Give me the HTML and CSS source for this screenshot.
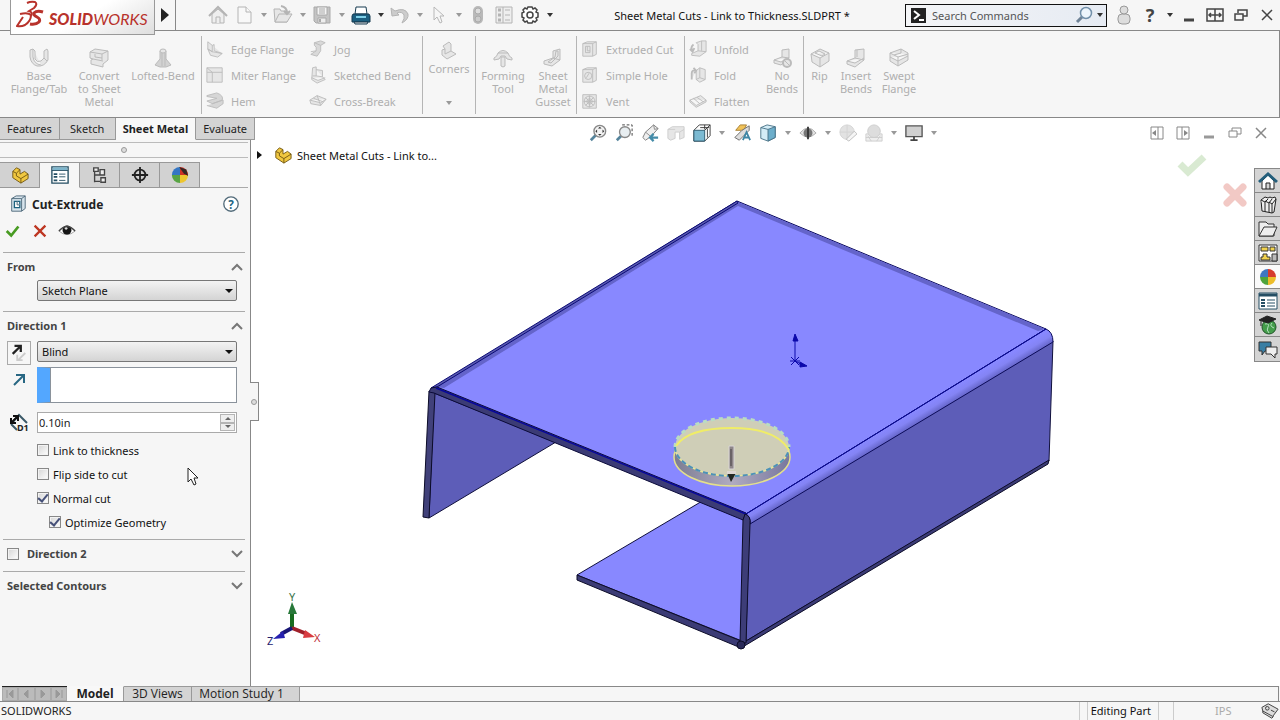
FILE: index.html
```html
<!DOCTYPE html>
<html lang="en">

<head>
  <meta charset="UTF-8" />
  <meta name="viewport" content="width=device-width, initial-scale=1.0" />
  <title>Sheet Metal Cuts - Link to Thickness.SLDPRT</title>
  <link rel="stylesheet" href="styles.css">
</head>

<body>

  <header class="titlebar">
    <div class="logo">
      <svg width="28" height="29" viewBox="0 0 28 29" fill="none" stroke="#b8322b" stroke-width="2">
        <path d="M11 3 Q15 1 19 2 Q22 4 18 8 L13 11 Q17 12 15 16" />
        <path d="M4 14 Q12 12 15 15 Q15 21 9 25 Q5 27 1 26 L7 17" />
        <path d="M27 12 Q21 10 18 13 Q17 15 21 17 Q25 19 23 22 Q20 25 14 24" stroke-width="3" />
      </svg>
      <span class="brand"><b>SOLID</b>WORKS</span>
    </div>
    <button class="logo-arrow" aria-label="Menu"><svg width="8" height="14" viewBox="0 0 8 14"><path d="M0 0 L8 7 L0 14 Z" fill="#222" /></svg></button>

    <nav class="quickbar">
      <button class="icon" aria-label="Home"><svg viewBox="0 0 20 20" fill="#eee" stroke="#b4b4b4"><path d="M4 9 V18 H16 V9 L10 4 Z" /><path d="M1 11 L10 2 L19 11" fill="none" stroke-width="2" /><path d="M8 18 V12 H12 V18" /></svg></button>
      <button class="icon first" aria-label="New"><svg viewBox="0 0 20 20" fill="#f8f8f8" stroke="#b4b4b4"><path d="M4 2 H12 L17 7 V18 H4 Z" /><path d="M12 2 V7 H17" /></svg></button>
      <button class="caret" aria-label="New options"></button>
      <button class="icon" aria-label="Open"><svg viewBox="0 0 20 20" fill="#e6e6e6" stroke="#b4b4b4"><path d="M1 4 H7 L8 6 H14 V17 H2 Z" /><path d="M2 17 L6 9 H19 L14 17 Z" /><path d="M8 1 Q14 2 14 8 M11 6 L14 9 L17 6" fill="none" stroke-width="2" /></svg></button>
      <button class="caret" aria-label="Open options"></button>
      <button class="icon" aria-label="Save"><svg viewBox="0 0 20 20" fill="#c4c4c4" stroke="#aaa"><path d="M2 2 H18 V18 H4 L2 16 Z" /><path d="M5 2 H15 V10 H5 Z" fill="#f4f4f4" /><path d="M7 4 H13 M7 6 H13 M7 8 H13" /><path d="M6 13 H14 V18 H6 Z" fill="#eee" /><path d="M8 14 V17" stroke-width="2" /></svg></button>
      <button class="caret" aria-label="Save options"></button>
      <button class="icon" aria-label="Print"><svg viewBox="0 0 20 20" stroke="#173b50"><path d="M5 2 H15 L16 9 H4 Z" fill="#fff" /><path d="M2 9 H18 L19 11 V17 H1 V11 Z" fill="#1c5f80" /><path d="M5 12 H15" stroke="#7ed0e8" stroke-width="2" /><path d="M3 17 H17 L16 19 H4 Z" fill="#ddd" /></svg></button>
      <button class="caret dark" aria-label="Print options"></button>
      <button class="icon" aria-label="Undo"><svg viewBox="0 0 20 20" fill="#ccc" stroke="#b4b4b4"><path d="M1 3 L2 11 L9 10 L7 8 Q12 6 14 10 Q15 13 12 18 Q19 14 18 9 Q15 2 5 6 Z" /></svg></button>
      <button class="caret" aria-label="Undo options"></button>
      <button class="icon" aria-label="Select"><svg viewBox="0 0 20 20" fill="#f6f6f6" stroke="#b8b8b8"><path d="M5 2 V15 L8 12 L11 18 L13 17 L11 11 H15 Z" /></svg></button>
      <button class="caret" aria-label="Select options"></button>
      <button class="icon" aria-label="Rebuild"><svg viewBox="0 0 20 20"><rect x="5" y="1" width="10" height="18" rx="5" fill="#b9b9b9" /><circle cx="10" cy="6" r="3" fill="#ddd" stroke="#aaa" /><circle cx="10" cy="14" r="3" fill="#ccc" stroke="#aaa" /></svg></button>
      <button class="icon first" aria-label="File properties"><svg viewBox="0 0 20 20" fill="#eee" stroke="#b4b4b4"><path d="M2 2 H18 V18 H2 Z M9 2 V18" /><path d="M4 5 H7 M4 10 H7 M4 15 H7" stroke-width="3" /><path d="M11 5 H16 M11 10 H16 M11 15 H16" /></svg></button>
      <button class="icon first" aria-label="Options"><svg viewBox="0 0 20 20" fill="none" stroke="#444"><path d="M8 2 H12 L13 4 L15 3 L17 5 L16 7 L18 8 V12 L16 13 L17 15 L15 17 L13 16 L12 18 H8 L7 16 L5 17 L3 15 L4 13 L2 12 V8 L4 7 L3 5 L5 3 L7 4 Z" fill="#fff" stroke-width="1.5" /><circle cx="10" cy="10" r="3" stroke-width="1.5" /></svg></button>
      <button class="caret dark" aria-label="More options"></button>
    </nav>

    <h1 class="doc-title">Sheet Metal Cuts - Link to Thickness.SLDPRT *</h1>

    <div class="search">
      <svg width="15" height="15" viewBox="0 0 15 15"><path d="M0 0 H15 V15 H0 Z" fill="#222" /><path d="M3 3 L8 7 L3 11 M8 12 H13" fill="none" stroke="#fff" stroke-width="2" /></svg>
      <input type="text" placeholder="Search Commands" aria-label="Search Commands" />
      <svg width="18" height="18" viewBox="0 0 18 18"><path d="M7 11 L2 16" stroke="#6f8397" stroke-width="3" /><circle cx="11" cy="7" r="5.5" fill="#edf5fc" stroke="#7290aa" stroke-width="1.5" /></svg>
      <button class="caret dark" aria-label="Search options"></button>
    </div>

    <div class="window-tools">
      <button aria-label="Log in"><svg viewBox="0 0 20 20" fill="#ddd" stroke="#999"><rect x="4" y="9" width="12" height="10" rx="4" /><circle cx="10" cy="5" r="4" /></svg></button>
      <button class="help">?</button>
      <button class="caret dark" aria-label="Help options"></button>
      <button aria-label="Minimize"><svg viewBox="0 0 20 20"><path d="M5 15 H15" stroke="#444" stroke-width="3" /></svg></button>
      <button aria-label="Span displays"><svg viewBox="0 0 20 20" fill="none" stroke="#444" stroke-width="1.5"><path d="M2 4 H18 V16 H2 Z M10 4 V16 M4 10 H16 M6 8 L4 10 L6 12 M14 8 L16 10 L14 12" /></svg></button>
      <button aria-label="Restore"><svg viewBox="0 0 20 20" fill="none" stroke="#444" stroke-width="1.5"><path d="M7 8 V5 H16 V11 H12" /><path d="M4 9 H12 V15 H4 Z" /></svg></button>
      <button aria-label="Close"><svg viewBox="0 0 20 20" fill="none" stroke="#444" stroke-width="1.5"><path d="M5 5 L15 15 M15 5 L5 15" /></svg></button>
    </div>
  </header>

  <section class="ribbon">
    <div class="group wide">
      <button class="big base" disabled><svg viewBox="0 0 20 20"><path d="M1 2 L4 1 L6 3 V11 Q8 15 12 13 L15 10 V3 L18 1 L19 3 V12 Q15 19 8 18 Q2 16 1 9 Z M4 1 V9 Q5 16 12 17 M15 10 L18 13" /></svg>Base<br>Flange/Tab</button>
      <button class="big convert" disabled><svg viewBox="0 0 20 20"><path d="M1 4 L6 1 L19 3 V12 L14 16 V19 L2 16 V12 L4 11 L1 10 Z" /><path d="M1 4 L13 6 L19 3 M13 6 V12 M4 11 L14 13 M6 6 V9 L13 10" fill="none" /></svg>Convert<br>to Sheet<br>Metal</button>
      <button class="big lofted" disabled><svg viewBox="0 0 20 20"><path d="M7 3 H13 V11 L18 17 L13 19 H7 L2 17 L7 11 Z" fill="#d2d2d2" /><ellipse cx="10" cy="3" rx="3" ry="2" /><path d="M9 5 V18 M12 5 V18" /></svg>Lofted-Bend</button>
    </div>

    <div class="group columns">
      <button class="small" disabled><svg viewBox="0 0 20 20"><path d="M2 2 L7 6 V13 L2 10 Z M2 10 L7 13 L18 15 L13 19 L5 17 Z M7 6 L9 5 V12 L18 15" /></svg>Edge Flange</button>
      <button class="small" disabled><svg viewBox="0 0 20 20"><path d="M1 2 H18 V18 H1 Z M1 7 H18 M7 7 V18 M1 2 L7 7" /></svg>Miter Flange</button>
      <button class="small" disabled><svg viewBox="0 0 20 20"><path d="M1 4 L12 1 Q20 4 18 9 L7 13 L1 10 L12 7 L1 5 Z M1 15 L12 18 L19 13 V9 L7 13" fill="#d6d6d6" /></svg>Hem</button>
      <button class="small" disabled><svg viewBox="0 0 20 20"><path d="M6 3 L13 1 L18 3 L13 6 V12 L9 18 L2 16 L8 12 V8 L6 6 Z M6 3 L13 6 M2 13 L8 12" fill="#d9d9d9" /></svg>Jog</button>
      <button class="small" disabled><svg viewBox="0 0 20 20"><path d="M4 2 L8 1 V11 L15 12 L18 15 L9 19 L3 15 Z M8 4 L15 5 V12 M4 11 L8 11 M3 13 L10 16 L18 13" /></svg>Sketched Bend</button>
      <button class="small" disabled><svg viewBox="0 0 20 20"><path d="M1 9 L9 4 L19 8 L13 15 L2 13 Z M1 9 L13 12 L19 8 M9 4 L13 15 M5 7 L16 11" /></svg>Cross-Break</button>
    </div>

    <div class="group">
      <button class="big corners" disabled><svg viewBox="0 0 20 20"><path d="M4 5 L10 1 L12 3 V10 L17 13 L8 18 L3 14 V9 L6 8 Z M12 10 L6 13 M6 8 V13" /></svg>Corners<i></i></button>
    </div>

    <div class="group">
      <button class="big forming" disabled><svg viewBox="0 0 20 20"><path d="M1 10 Q4 9 5 5 Q10 0 15 5 Q16 9 19 10 V12 L14 11 L12 8 H8 L6 11 L1 12 Z M8 9 H12 V18 L10 19 L8 18 Z M5 5 H15" /></svg>Forming<br>Tool</button>
      <button class="big gusset" disabled><svg viewBox="0 0 20 20"><path d="M1 13 L10 10 V3 L17 1 V12 L9 18 L1 16 Z M10 10 L17 12 M13 3 L15 3 V8 L8 15 L5 14 L12 9 Z" /></svg>Sheet<br>Metal<br>Gusset</button>
    </div>

    <div class="group columns single cuts">
      <button class="small" disabled><svg viewBox="0 0 20 20"><path d="M2 4 L7 2 H17 V16 L13 18 H2 Z M2 4 H13 V18 M13 4 L17 2 M5 7 H10 V14 H5 Z M7 7 V12 H10" /></svg>Extruded Cut</button>
      <button class="small" disabled><svg viewBox="0 0 20 20"><path d="M2 4 L7 2 H17 V16 L13 18 H2 Z M2 4 H13 V18 M13 4 L17 2" /><circle cx="8" cy="11" r="4" /><path d="M6 13 L9 8" /></svg>Simple Hole</button>
      <button class="small" disabled><svg viewBox="0 0 20 20"><path d="M2 3 H17 V18 H2 Z" /><circle cx="9.5" cy="10.5" r="6" /><circle cx="9.5" cy="10.5" r="3" /><path d="M9.5 4 V17 M3 10.5 H16 M5 6 L14 15 M14 6 L5 15" /></svg>Vent</button>
    </div>

    <div class="group folds">
      <div class="columns single">
        <button class="small" disabled><svg viewBox="0 0 20 20"><path d="M8 3 L14 1 H19 V13 L12 18 L3 17 V15 L10 12 V5 Z M10 12 L19 13 M14 1 V12" /><path d="M5 5 Q1 8 4 12 M1 10 L4 13 L6 9" stroke-width="2" /></svg>Unfold</button>
        <button class="small" disabled><svg viewBox="0 0 20 20"><path d="M8 5 L12 2 L18 4 V15 L12 18 L8 15 Z M12 2 V13 L8 15 M12 13 L18 15" /><path d="M3 15 V8 Q3 4 8 5 M5 2 L8 5 L6 8" stroke-width="2" /></svg>Fold</button>
        <button class="small" disabled><svg viewBox="0 0 20 20"><path d="M1 9 L13 4 L19 9 L8 15 Z M1 9 V11 L8 17 L19 11 V9 M5 7 L12 13 M9 6 L16 11" /></svg>Flatten</button>
      </div>
      <button class="big nobends" disabled><svg viewBox="0 0 20 20"><path d="M2 12 L10 9 V2 L17 1 V10 L9 17 L2 15 Z M10 9 L17 10 M2 12 L9 14 L17 10" /><circle cx="15" cy="15" r="4" stroke-width="2" /><path d="M12 12 L18 18" /></svg>No<br>Bends</button>
    </div>

    <div class="group last">
      <button class="big rip" disabled><svg viewBox="0 0 20 20"><path d="M1 6 L10 1 L19 5 V13 L10 19 L2 14 Z M1 6 L10 10 L19 5 M10 10 V19 M5 5 L12 8 L15 6 L9 3 Z" /></svg>Rip</button>
      <button class="big insert" disabled><svg viewBox="0 0 20 20"><path d="M1 13 L9 10 V2 L18 1 V12 L9 19 L1 16 Z M9 10 L18 12 M1 13 L9 15 L18 10 M11 2 V9" /></svg>Insert<br>Bends</button>
      <button class="big swept" disabled><svg viewBox="0 0 20 20"><path d="M1 5 L12 1 L19 5 V12 L9 18 L1 13 Z M1 5 L9 9 L19 6 M9 9 V18 M1 9 L9 13 L19 8 M12 1 V5 L5 7" /></svg>Swept<br>Flange</button>
    </div>
  </section>

  <main class="workspace">
    <aside class="panel">
      <nav class="ribbon-tabs">
        <button>Features</button>
        <button>Sketch</button>
        <button class="active">Sheet Metal</button>
        <button>Evaluate</button>
      </nav>
      <div class="grip"><i class="dot"></i></div>

      <nav class="manager-tabs">
        <button aria-label="Feature tree"><svg viewBox="0 0 20 20" fill="#f0c740" stroke="#6f5510"><path d="M2 6 L6 2 L10 4 V9 L15 6 L19 9 V14 L11 19 L2 13 Z" /><path d="M2 6 L6 8 L10 4 M6 8 V11 L11 14 L19 9 M11 14 V19" fill="none" /></svg></button>
        <button class="active" aria-label="Property manager"><svg viewBox="0 0 20 20" fill="#fff" stroke="#244e63"><path d="M1 1 H19 V19 H1 Z" stroke-width="1.5" /><path d="M2 3 H18" stroke="#7fb6cd" stroke-width="3" /><path d="M1 5 H19" /><path d="M3 9 H7 M3 12 H7 M3 16 H7" stroke-width="2" /><path d="M9 9 H16 M9 12 H16 M9 16 H16" /></svg></button>
        <button aria-label="Configurations"><svg viewBox="0 0 20 20" fill="#eee" stroke="#444"><path d="M3 2 H8 V6 H3 Z M4 6 V18 M4 10 H10 M4 17 H10 M10 4 H15 V10 H10 Z M11 13 H16 V18 H11 Z" stroke-width="1.5" /></svg></button>
        <button aria-label="Dimensions"><svg viewBox="0 0 20 20" fill="none" stroke="#222" stroke-width="2"><circle cx="10" cy="10" r="6" /><path d="M10 1 V19 M1 10 H19" /></svg></button>
        <button aria-label="Display"><svg viewBox="0 0 20 20"><circle cx="10" cy="10" r="9" fill="#d8d8d8" /><path d="M10 10 L1 10 A9 9 0 0 1 10 1 Z" fill="#3576c3" /><path d="M10 10 V1 A9 9 0 0 1 19 10 Z" fill="#cf3127" /><path d="M10 10 H19 A9 9 0 0 1 10 19 Z" fill="#edc52e" /><path d="M10 10 V19 A9 9 0 0 1 1 10 Z" fill="#58a444" /><path d="M9 1 L17 4 L19 11 L14 8 Z" fill="#332725" /></svg></button>
      </nav>

      <div class="feature-head">
        <svg viewBox="0 0 20 20" fill="#d7e4ec" stroke="#496577"><path d="M3 4 L8 1 H18 V15 L14 18 H3 Z M3 4 H14 V18 M14 4 L18 1" /><path d="M6 7 H12 V14 H6 Z" fill="#fff" stroke="#1d627f" stroke-width="1.5" /><path d="M9 7 V11 H12" /></svg>
        <h2>Cut-Extrude</h2>
        <button aria-label="Help"><svg viewBox="0 0 20 20"><circle cx="10" cy="10" r="8" fill="#fff" stroke="#526b7a" stroke-width="1.5" /><text x="10" y="15" text-anchor="middle" font-size="13" font-weight="bold" fill="#226585">?</text></svg></button>
      </div>
      <div class="actions">
        <button aria-label="OK"><svg viewBox="0 0 20 20" fill="none" stroke="#489b22" stroke-width="3"><path d="M3 10 L8 15 L16 5" /></svg></button>
        <button aria-label="Cancel"><svg viewBox="0 0 20 20" fill="none" stroke="#bd3622" stroke-width="2.5"><path d="M4 4 L16 16 M16 4 L4 16" /></svg></button>
        <button aria-label="Preview"><svg viewBox="0 0 20 20"><path d="M1 10 Q10 -1 19 10 Q10 18 1 10 Z" fill="#fff" stroke="#999" /><circle cx="10" cy="9" r="5" fill="#161616" /><circle cx="9" cy="7" r="1.5" fill="#ddd" /><path d="M1 10 Q10 0 19 10" fill="none" stroke="#444" stroke-width="1.5" /></svg></button>
      </div>

      <section class="block from">
        <button class="block-title">From<svg class="chevron" viewBox="0 0 12 8"><path d="M1 7 L6 2 L11 7" /></svg></button>
        <div class="field">
          <div class="select"><select aria-label="From">
              <option>Sketch Plane</option>
            </select></div>
        </div>
      </section>

      <section class="block direction">
        <button class="block-title">Direction 1<svg class="chevron" viewBox="0 0 12 8"><path d="M1 7 L6 2 L11 7" /></svg></button>
        <div class="field">
          <button class="reverse" aria-label="Reverse direction"><svg viewBox="0 0 20 20"><path d="M3 11 L11 3 M5 2 H12 V9" fill="none" stroke="#222" stroke-width="2.5" /><path d="M17 10 L9 18 M8 12 V18 H14" fill="none" stroke="#ccc" stroke-width="2" /></svg></button>
          <div class="select"><select aria-label="End condition">
              <option>Blind</option>
            </select></div>
        </div>
        <div class="field">
          <svg class="lead" viewBox="0 0 24 24" fill="none" stroke="#286783" stroke-width="2"><path d="M7 18 L16 9 M9 8 H17 V16" /></svg>
          <textarea class="list" aria-label="Direction of extrusion"></textarea>
        </div>
        <div class="field depth-field">
          <svg class="lead" viewBox="0 0 24 24"><path d="M4 12 L12 3 L20 11 M4 12 L10 18" fill="none" stroke="#3b5968" stroke-width="2" /><path d="M4 11 L11 4 M6 4 H11 V9 M4 6 V11 H9" fill="none" stroke="#111" stroke-width="2" /><text x="10" y="19" font-size="9" font-weight="bold" fill="#222">D1</text></svg>
          <div class="spin">
            <input type="text" value="0.10in" aria-label="Depth" />
            <span><button class="up" aria-label="Increase"></button><button class="down" aria-label="Decrease"></button></span>
          </div>
        </div>
        <div class="checks">
          <label><input type="checkbox" />Link to thickness</label>
          <label><input type="checkbox" />Flip side to cut</label>
          <label><input type="checkbox" checked />Normal cut</label>
          <label class="nested"><input type="checkbox" checked />Optimize Geometry</label>
        </div>
      </section>

      <section class="block closed">
        <label class="block-title"><input type="checkbox" />Direction 2<svg class="chevron" viewBox="0 0 12 8"><path d="M1 1 L6 6 L11 1" /></svg></label>
      </section>
      <section class="block closed">
        <button class="block-title">Selected Contours<svg class="chevron" viewBox="0 0 12 8"><path d="M1 1 L6 6 L11 1" /></svg></button>
      </section>

      <button class="splitter" aria-label="Collapse panel"><i class="dot"></i></button>
      <svg class="cursor" width="12" height="19" viewBox="0 0 12 19"><path d="M1 1 V15 L4 12 L7 18 L9 17 L7 11 H11 Z" fill="#fff" stroke="#222" /></svg>
    </aside>

    <section class="viewport">
      <svg class="scene" viewBox="251 118 1029 568" preserveAspectRatio="xMidYMid meet">
        <defs>
          <linearGradient id="bend" gradientUnits="userSpaceOnUse" x1="896" y1="422" x2="902" y2="432">
            <stop offset="0" stop-color="#8888ff" />
            <stop offset="0.5" stop-color="#8484f4" />
            <stop offset="1" stop-color="#6868cc" />
          </linearGradient>
          <linearGradient id="wall" x1="0" x2="1" y1="0" y2="0">
            <stop offset="0" stop-color="#7c7c92" />
            <stop offset="0.5" stop-color="#b0abc0" />
            <stop offset="1" stop-color="#77779e" />
          </linearGradient>
        </defs>

        <!-- left and bottom flanges -->
        <path d="M434 393 L556 442 L429 518 Z" fill="#5d5db8" stroke="#10103c" />
        <path d="M429 391 L435 393 L429 518 L423 517 Z" fill="#41417a" stroke="#0c0c28" />
        <path d="M577 575 L704 500 L746 517 L742 641 Z" fill="#8888ff" stroke="#10103c" />
        <path d="M577 575 L741 641 V648 L577 580 Z" fill="#3b3b75" stroke="#0c0c28" />

        <!-- right side -->
        <path d="M749 522 L1053 341 L1049 461 L746 641 Z" fill="#5d5db8" stroke="#10103c" />
        <path d="M746 641 L1049 460 L1048 464 L741 648 Z" fill="#3b3b75" stroke="#0c0c28" />

        <!-- top face -->
        <path d="M737 201 L1046 329 L746 514 L434 388 Z" fill="#8888ff" stroke="#0b0b58" />
        <path d="M738 202 L1045 329 L1038 331 L738 206 L444 388 L436 387 Z" fill="#6464ca" />
        <path d="M737 201 L431 388 L437 387 L738 203 Z" fill="#5b5bb0" stroke="#0b0b75" />
        <path d="M1046 329 L746 514 Q751 517 750 524 L1053 342 Q1053 332 1046 329 Z" fill="url(#bend)" stroke="#0b0b58" />
        <path d="M1046 329 L746 514" stroke="#0808a0" />
        <path d="M431 388 L437 387 L746 513 L743 520 L434 393 L429 392 Z" fill="#3b3b75" stroke="#0c0c3a" />
        <path d="M436 388 L746 514" stroke="#08089c" stroke-width="1.5" />
        <path d="M743 520 L745 514 Q751 516 750 524 L746 643 H740 Z" fill="#3d3d78" stroke="#0c0c28" />
        <circle cx="741" cy="645" r="4" fill="#292958" stroke="#0c0c28" />

        <!-- cut preview -->
        <ellipse cx="732" cy="457" rx="58" ry="29" fill="url(#wall)" stroke="#e4e08b" stroke-width="1.5" />
        <ellipse cx="732" cy="447" rx="57" ry="29" fill="#cfceb7" />
        <path d="M675 447 A57 29 0 0 1 789 447" fill="none" stroke="#b9dcc2" stroke-width="3" stroke-dasharray="4 4" />
        <path d="M675 447 A57 29 0 0 0 789 447" fill="none" stroke="#e8e69b" stroke-width="1.5" />
        <path d="M675 447 A57 29 0 0 0 789 447" fill="none" stroke="#4c91b9" stroke-width="2" stroke-dasharray="5 3" />
        <path d="M676 446 Q688 428 732 428 Q776 428 789 450" fill="none" stroke="#f0ed67" stroke-width="2" />
        <path d="M729 446 H734 V469 H729 Z" fill="#8e8689" stroke="#d8d5d5" />
        <path d="M731 449 V466" stroke="#6a6366" stroke-width="2" />
        <path d="M727 473 L731 482 L736 473 Z" fill="#222721" />
        <path d="M727 471 H736 V474 H727 Z" fill="#ddd6d2" />

        <!-- origin -->
        <g stroke="#0b08aa" fill="#0b08aa">
          <path d="M795 361 V338 M795 361 L803 365 M791 357 L799 365 M799 357 L791 365 M790 361 H800" />
          <path d="M795 334 L798 341 H793 Z M800 362 L807 366 L800 367 Z" />
        </g>

        <!-- triad -->
        <path d="M292 629 V612" stroke="#176c20" stroke-width="4" />
        <path d="M292 602 L297 614 H288 Z" fill="#28783a" />
        <path d="M292 628 L307 634" stroke="#a0202a" stroke-width="4" />
        <path d="M315 637 L305 630 L303 638 Z" fill="#d83c42" />
        <path d="M292 628 L281 634" stroke="#191675" stroke-width="4" />
        <path d="M273 639 L283 631 L285 638 Z" fill="#2620b0" />
        <text x="289" y="601" fill="#39734a">Y</text>
        <text x="314" y="642" fill="#be3039">X</text>
        <text x="267" y="645" fill="#25216d">Z</text>
      </svg>

      <div class="view-head">
        <nav class="view-tools">
          <button aria-label="Zoom to fit"><svg viewBox="0 0 20 20"><path d="M8 12 L2 18" stroke="#55849c" stroke-width="3" /><circle cx="12" cy="8" r="6.5" fill="#f3f3f3" stroke="#888" stroke-width="1.5" /><path d="M12 3 L14 5 H10 Z M12 13 L10 11 H14 Z M7 8 L9 6 V10 Z M17 8 L15 6 V10 Z" fill="#333" /></svg></button>
          <button aria-label="Zoom to area"><svg viewBox="0 0 20 20"><path d="M8 1 H19 V14" fill="none" stroke="#333" stroke-dasharray="3 2" /><path d="M7 13 L2 18" stroke="#55849c" stroke-width="3" /><circle cx="11" cy="9" r="6" fill="#e8eef1" stroke="#888" stroke-width="1.5" /></svg></button>
          <button aria-label="Previous view"><svg viewBox="0 0 20 20"><path d="M2 15 L5 9 L14 1 L19 5 L11 14 L5 18 Z" fill="#eee" stroke="#777" /><path d="M5 9 L11 14 M14 1 L15 6 L19 5" fill="none" stroke="#888" /><path d="M19 15 H12 M14 11 L10 15 L14 19" fill="none" stroke="#438ba8" stroke-width="2.5" /></svg></button>
          <button aria-label="Section view"><svg viewBox="0 0 20 20" fill="#e6e6e6" stroke="#ccc"><path d="M1 6 L6 3 H19 V15 L14 17 V9 H9 V16 L4 18 L1 16 Z M1 6 H9 M14 9 L19 6" /></svg></button>
          <button aria-label="View orientation"><svg viewBox="0 0 20 20"><path d="M7 1 H19 V13 L13 19 H1 V7 Z" fill="#fff" stroke="#333" /><path d="M1 7 H13 V19 H1 Z" fill="#7cbad2" stroke="#28576d" /><path d="M13 7 L19 1 M13 1 V6 M8 4 H18 M16 5 V15" fill="none" stroke="#333" /></svg></button>
          <button class="caret" aria-label="Orientation options"></button>
          <button aria-label="Edit view"><svg viewBox="0 0 20 20"><path d="M3 7 L8 1 H15 L12 7 Z" fill="#f0c258" stroke="#a57c2e" /><path d="M2 15 L10 7 L18 2 V7 L7 18 Z" fill="#ddd" stroke="#666" /><path d="M11 18 L15 9 L19 18 M12 15 H18" fill="none" stroke="#3d86a5" stroke-width="2" /></svg></button>
          <button aria-label="Display style"><svg viewBox="0 0 20 20" stroke="#456f85"><path d="M2 4 L9 1 L18 3 V15 L10 19 L2 16 Z" fill="#d4edf7" /><path d="M10 6 L18 3 V15 L10 19 Z" fill="#6caecb" /><path d="M2 4 L10 6" /></svg></button>
          <button class="caret" aria-label="Display options"></button>
          <button aria-label="Hide or show"><svg viewBox="0 0 20 20"><path d="M1 10 Q10 -1 19 10 Q10 19 1 10 Z" fill="#e4e4e4" stroke="#aaa" /><circle cx="10" cy="10" r="5" fill="#777" /><path d="M10 3 V17" stroke="#333" stroke-width="2" /></svg></button>
          <button class="caret" aria-label="Visibility options"></button>
          <button aria-label="Edit appearance"><svg viewBox="0 0 20 20" stroke="#d4d4d4"><circle cx="9" cy="9" r="8" fill="#e2e2e2" /><path d="M1 9 H17 M9 1 V17" /><path d="M8 17 L17 8 L20 11 L11 19 Z" fill="#f5f5f5" stroke="#bbb" /></svg></button>
          <button aria-label="Apply scene"><svg viewBox="0 0 20 20" stroke="#ccc"><path d="M1 11 H19 V19 H1 Z" fill="#eee" /><circle cx="10" cy="8" r="7" fill="#ddd" /><path d="M3 13 L7 19 M17 13 L13 19 M1 15 H19" /></svg></button>
          <button class="caret" aria-label="Scene options"></button>
          <button aria-label="View settings"><svg viewBox="0 0 20 20"><path d="M1 2 H19 V14 H1 Z" fill="#d0d0d0" stroke="#555" stroke-width="1.5" /><path d="M10 14 V18 M6 18 H14" stroke="#444" stroke-width="2" /></svg></button>
          <button class="caret" aria-label="Settings options"></button>
        </nav>
        <nav class="pane-tools">
          <button aria-label="Dock left"><svg viewBox="0 0 20 20" fill="none" stroke="#888"><path d="M4 4 H16 V16 H4 Z M11 4 V16" /><path d="M9 7 V13 L5 10 Z" fill="#888" stroke="none" /></svg></button>
          <button aria-label="Dock right"><svg viewBox="0 0 20 20" fill="none" stroke="#888"><path d="M4 4 H16 V16 H4 Z M9 4 V16" /><path d="M11 7 V13 L15 10 Z" fill="#888" stroke="none" /></svg></button>
          <button aria-label="Minimize document"><svg viewBox="0 0 20 20"><path d="M5 14 H15" stroke="#999" stroke-width="3" /></svg></button>
          <button aria-label="Restore document"><svg viewBox="0 0 20 20" fill="none" stroke="#888"><path d="M7 8 V5 H16 V11 H12" /><path d="M4 8 H12 V14 H4 Z" /></svg></button>
          <button aria-label="Close document"><svg viewBox="0 0 20 20" stroke="#888" stroke-width="1.5"><path d="M5 5 L15 15 M15 5 L5 15" /></svg></button>
        </nav>
      </div>

      <button class="tree-root">
        <svg width="5" height="8" viewBox="0 0 5 8"><path d="M0 0 L5 4 L0 8 Z" fill="#111" /></svg>
        <svg width="18" height="18" viewBox="0 0 20 20" fill="#f0c740" stroke="#6f5510"><path d="M2 6 L6 2 L10 4 V9 L15 6 L19 9 V14 L11 19 L2 13 Z" /><path d="M2 6 L6 8 L10 4 M6 8 V11 L11 14 L19 9 M11 14 V19" fill="none" /></svg>
        <span>Sheet Metal Cuts - Link to...</span>
      </button>

      <div class="confirm">
        <button class="accept" aria-label="Accept"><svg width="30" height="24" viewBox="0 0 30 24"><path d="M3 11 L11 19 L27 4" fill="none" stroke="#d9ead2" stroke-width="7" /></svg></button>
        <button class="reject" aria-label="Reject"><svg width="26" height="26" viewBox="0 0 26 26"><path d="M5 5 L21 21 M21 5 L5 21" fill="none" stroke="#f2c9c5" stroke-width="7" stroke-linecap="round" /></svg></button>
      </div>

      <nav class="task-pane">
        <button aria-label="Resources"><svg viewBox="0 0 20 20" fill="#fff" stroke="#222"><path d="M4 10 V18 H16 V10 L10 4 Z M8 18 V12 H12 V18" /><path d="M1 11 L10 3 L19 11" fill="none" stroke="#245e7b" stroke-width="3" /></svg></button>
        <button aria-label="Design library"><svg viewBox="0 0 20 20" fill="#eee" stroke="#222"><path d="M3 5 L7 2 L10 3 L12 2 L14 3 L17 2 L18 4 L16 17 L14 18 L4 16 Z" /><path d="M3 5 L7 7 V17 M7 7 L10 4 M7 6 L11 8 V17 M11 8 L14 4 M11 7 L14 9 V18 M14 9 L18 4" /></svg></button>
        <button aria-label="File explorer"><svg viewBox="0 0 20 20" fill="#eee" stroke="#333"><path d="M1 3 H8 L10 5 H16 V17 H1 Z" /><path d="M1 17 L6 8 H19 L15 17 Z" /></svg></button>
        <button aria-label="View palette"><svg viewBox="0 0 20 20" fill="#f2d34f" stroke="#333"><path d="M1 2 H19 V18 H1 Z" fill="#fff" /><path d="M3 4 H10 V8 H3 Z M12 4 H17 V8 H12 Z M3 14 H5 V11 H9 V14 H12 V17 H3 Z" /><path d="M14 11 H19 V18 H14 Z" fill="#bbb" /></svg></button>
        <button class="active" aria-label="Appearances"><svg viewBox="0 0 20 20"><path d="M10 10 H2 A8 8 0 0 1 10 2 Z" fill="#3f77c2" /><path d="M10 10 V2 A8 8 0 0 1 18 10 Z" fill="#d63b2d" /><path d="M10 10 H18 A8 8 0 0 1 10 18 Z" fill="#edbd2b" /><path d="M10 10 V18 A8 8 0 0 1 2 10 Z" fill="#4fa33c" /></svg></button>
        <button aria-label="Custom properties"><svg viewBox="0 0 20 20" fill="#fff" stroke="#254e64"><path d="M1 2 H19 V18 H1 Z" /><path d="M1 4 H19" stroke-width="3" /><path d="M3 9 H7 M3 12 H7 M3 15 H7" stroke-width="2" /><path d="M9 9 H17 M9 12 H17 M9 15 H17" /></svg></button>
        <button aria-label="Learning"><svg viewBox="0 0 20 20"><circle cx="11" cy="12" r="7" fill="#449d4b" stroke="#22552b" /><path d="M7 9 Q12 8 10 12 Q8 15 11 18 M14 8 Q11 11 16 13" fill="none" stroke="#b6e0c1" /><path d="M1 5 L9 1 L18 4 L10 8 Z M3 6 V11" fill="#222" stroke="#222" /></svg></button>
        <button aria-label="Forum"><svg viewBox="0 0 20 20" stroke="#333"><path d="M1 3 H13 V12 H7 L4 16 V12 H1 Z" fill="#387ea4" /><path d="M8 8 H19 V15 H17 V19 L13 15 H8 Z" fill="#eee" /></svg></button>
      </nav>
    </section>
  </main>

  <nav class="model-tabs">
    <div class="steps">
      <button aria-label="First"><svg viewBox="0 0 12 12"><path d="M3 2 V10 M9 2 L5 6 L9 10 Z" /></svg></button>
      <button aria-label="Previous"><svg viewBox="0 0 12 12"><path d="M8 2 L4 6 L8 10 Z" /></svg></button>
      <button aria-label="Next"><svg viewBox="0 0 12 12"><path d="M4 2 L8 6 L4 10 Z" /></svg></button>
      <button aria-label="Last"><svg viewBox="0 0 12 12"><path d="M3 2 L7 6 L3 10 Z M9 2 V10" /></svg></button>
    </div>
    <button class="model active">Model</button>
    <button class="views">3D Views</button>
    <button class="motion">Motion Study 1</button>
    <div class="filler"></div>
  </nav>

  <footer class="statusbar">
    <span class="app-name">SOLIDWORKS</span>
    <span class="state">Editing Part</span>
    <span class="units">IPS</span>
    <button aria-label="Tags"><svg viewBox="0 0 20 20" fill="#ddd" stroke="#333"><path d="M1 6 L8 2 L19 8 L13 16 L2 10 Z M2 10 V12 L12 18 L14 16" /><circle cx="7" cy="7" r="2" /><path d="M11 9 L15 11" /></svg></button>
  </footer>

</body>

</html>
```
FILE: styles.css
```css
* {
  box-sizing: border-box;
}

body {
  margin: 0;
  min-height: 100vh;
  display: flex;
  flex-direction: column;
  background-color: #f6f6f6;
  color: #222;
  font-family: "Noto Sans", "Open Sans", sans-serif;
  font-size: 11px;
  line-height: 13px;
}

button,
input,
select,
textarea {
  margin: 0;
  padding: 0;
  border: 0;
  background: none;
  color: inherit;
  font: inherit;
}

h1,
h2 {
  margin: 0;
  font-size: 11px;
}

svg {
  display: block;
  flex: none;
}

/* title bar */

.titlebar {
  display: flex;
  align-items: center;
  height: 31px;
  border-bottom: 1px solid #888;
}

.logo {
  position: relative;
  z-index: 2;
  align-self: flex-start;
  display: flex;
  align-items: center;
  gap: 5px;
  width: 145px;
  height: 35px;
  margin-left: 10px;
  padding: 0 0 6px 5px;
  background: linear-gradient(150deg, #fff 50%, #dedede);
  border: 1px solid #999;
  border-top: 0;
}

.brand {
  padding-top: 8px;
  color: #b8322b;
  font-family: "Lato", sans-serif;
  font-size: 16px;
  font-style: italic;
}

.brand b {
  font-weight: 900;
}

.logo-arrow {
  display: flex;
  align-items: center;
  justify-content: center;
  width: 21px;
  height: 30px;
  border-right: 1px solid #888;
}

.quickbar {
  display: flex;
  align-items: center;
  margin-left: 32px;
}

.icon {
  width: 20px;
  height: 20px;
}

.icon.first {
  margin-left: 6px;
}

.caret {
  display: flex;
  align-items: center;
  justify-content: center;
  width: 19px;
  height: 20px;
}

.caret::after {
  content: "";
  border: 3px solid transparent;
  border-top: 4px solid #999;
  border-bottom: 0;
}

.caret.dark::after {
  border-top-color: #333;
}

.doc-title {
  flex: 1;
  color: #111;
  font-weight: normal;
  text-align: center;
}

.search {
  display: flex;
  align-items: center;
  width: 202px;
  height: 23px;
  padding-left: 5px;
  border: 1px solid #111;
  background: linear-gradient(90deg, #f4f5f7, #e6ebf3);
}

.search input {
  flex: 1;
  min-width: 0;
  padding-left: 6px;
}

.search input::placeholder {
  color: #555;
  opacity: 1;
}

.search .caret {
  width: 13px;
}

.window-tools {
  display: flex;
  align-items: center;
  padding-left: 4px;
}

.window-tools button {
  width: 26px;
  height: 20px;
  padding: 0 3px;
}

.window-tools .caret {
  width: 13px;
}

.window-tools .help {
  font-size: 18px;
  font-weight: bold;
  line-height: 20px;
  color: #444;
}

/* ribbon */

.ribbon {
  display: flex;
  height: 87px;
  padding: 5px 0 3px;
  border-right: 1px solid #888;
  border-bottom: 1px solid #888;
}

.group {
  display: flex;
  border-right: 1px solid #b5b5b5;
}

.group.last {
  border-right: 0;
}

.ribbon button {
  color: #afafaf;
  white-space: nowrap;
}

.ribbon svg {
  fill: #e6e6e6;
  stroke: #bbb;
}

.big {
  align-self: flex-start;
  padding-top: 12px;
  text-align: center;
}

.big svg {
  width: 20px;
  height: 20px;
  margin: 0 auto 1px;
}

.base {
  width: 78px;
}

.convert {
  width: 42px;
}

.lofted {
  width: 81px;
  padding-left: 5px;
}

.columns {
  display: grid;
  grid-template-rows: repeat(3, 26px);
  grid-template-columns: 103px 1fr;
  grid-auto-flow: column;
  width: 221px;
  padding-left: 4px;
}

.columns.single {
  grid-template-columns: 1fr;
}

.columns.cuts {
  width: 108px;
}

.folds .columns {
  width: 76px;
}

.small {
  display: flex;
  align-items: center;
  gap: 7px;
}

.small svg {
  width: 18px;
  height: 18px;
}

.corners {
  width: 52px;
  padding-top: 5px;
}

.corners i {
  display: block;
  width: 0;
  margin: 26px auto 0;
  border: 3px solid transparent;
  border-top: 4px solid #999;
  border-bottom: 0;
}

.forming {
  width: 54px;
}

.gusset {
  width: 46px;
}

.nobends {
  width: 42px;
}

.rip {
  width: 31px;
}

.insert {
  width: 42px;
}

.swept {
  width: 44px;
}

/* property panel */

.workspace {
  flex: 1;
  display: flex;
}

.panel {
  position: relative;
  z-index: 1;
  width: 251px;
  flex: none;
  border-right: 1px solid #888;
}

.ribbon-tabs {
  display: flex;
  width: max-content;
}

.ribbon-tabs button {
  min-width: 56px;
  height: 22px;
  padding: 0 7px;
  background-color: #d4d4d4;
  border: 1px solid #999;
  border-width: 0 1px 1px 0;
}

.ribbon-tabs .active {
  background-color: #f8f8f8;
  border-bottom-color: #f8f8f8;
  font-weight: bold;
}

.grip {
  display: flex;
  align-items: center;
  justify-content: center;
  height: 16px;
  margin: 2px 2px 4px 0;
  border: 1px solid #bbb;
  border-width: 1px 0;
}

.dot {
  width: 6px;
  height: 6px;
  border: 1px solid #999;
  border-radius: 50%;
  background-color: #ddd;
}

.manager-tabs {
  display: flex;
  height: 26px;
  margin-right: 2px;
  border-bottom: 1px solid #aaa;
}

.manager-tabs button {
  display: flex;
  align-items: center;
  justify-content: center;
  width: 40px;
  height: 26px;
  background-color: #d2d2d2;
  border: 1px solid #999;
  border-left: 0;
}

.manager-tabs .active {
  background-color: #f6f6f6;
  border-bottom-color: #f6f6f6;
}

.manager-tabs svg,
.feature-head svg,
.actions svg {
  width: 18px;
  height: 18px;
}

.feature-head {
  display: flex;
  align-items: center;
  height: 32px;
  padding: 0 10px 0 9px;
}

.feature-head h2 {
  flex: 1;
  margin-left: 5px;
  font-size: 12px;
}

.actions {
  display: flex;
  align-items: flex-start;
  gap: 9px;
  height: 32px;
  padding: 2px 4px;
}

.block {
  margin: 0 5px 0 3px;
  padding: 0 2px 0 4px;
  border-top: 1px solid #aaa;
}

.block-title {
  display: flex;
  align-items: center;
  width: 100%;
  height: 27px;
  color: #444;
  font-weight: bold;
}

.chevron {
  width: 12px;
  height: 8px;
  margin-left: auto;
  fill: none;
  stroke: #777;
  stroke-width: 2;
}

.field {
  display: flex;
  padding-left: 30px;
}

.from {
  height: 59px;
}

.direction {
  height: 228px;
}

.direction .field {
  gap: 6px;
  margin-top: 2px;
  padding-left: 0;
}

.select {
  position: relative;
  width: 200px;
}

.select select {
  appearance: none;
  width: 100%;
  height: 21px;
  padding-left: 4px;
  border: 1px solid #777;
  border-radius: 2px;
  background: linear-gradient(#f3f3f3, #d4d4d4);
  color: #111;
}

.select::after {
  content: "";
  position: absolute;
  top: 9px;
  right: 4px;
  border: 4px solid transparent;
  border-top-color: #111;
  border-bottom: 0;
  pointer-events: none;
}

.reverse {
  width: 24px;
  height: 24px;
  padding: 2px;
  border: 1px solid #aaa;
}

.reverse svg {
  width: 18px;
  height: 18px;
}

.lead {
  width: 24px;
  height: 24px;
}

.list {
  width: 200px;
  height: 36px;
  background-color: #fff;
  border: 1px solid #8a929b;
  border-left: 13px solid #53a7ff;
  box-shadow: inset 1px 0 #8a929b;
  resize: none;
}

.direction .depth-field {
  height: 21px;
  margin-top: 9px;
}

.spin {
  display: flex;
  width: 200px;
  height: 21px;
  background-color: #fff;
  border: 1px solid #aaa;
}

.spin input {
  flex: 1;
  min-width: 0;
  padding-left: 1px;
}

.spin span {
  display: flex;
  flex-direction: column;
  width: 17px;
  padding: 1px;
}

.spin button {
  flex: 1;
  display: flex;
  align-items: center;
  justify-content: center;
  border: 1px solid #b5b5b5;
  background-color: #eee;
}

.spin button::after {
  content: "";
  border: 3px solid transparent;
}

.spin .up::after {
  border-top: 0;
  border-bottom-color: #666;
}

.spin .down::after {
  border-bottom: 0;
  border-top-color: #666;
}

input[type="checkbox"] {
  appearance: none;
  flex: none;
  display: flex;
  align-items: center;
  justify-content: center;
  width: 12px;
  height: 12px;
  border: 1px solid #888;
  background: linear-gradient(135deg, #d5d5d5, #fff);
  box-shadow: inset 0 0 0 1px #f3f3f3;
}

input[type="checkbox"]:checked::after {
  content: "";
  width: 4px;
  height: 8px;
  margin-bottom: 2px;
  border: solid #465078;
  border-width: 0 2px 2px 0;
  transform: rotate(40deg);
}

.checks {
  padding: 5px 0 0 30px;
}

.checks label {
  display: flex;
  align-items: center;
  gap: 4px;
  height: 24px;
  color: #111;
}

.checks .nested {
  margin-left: 12px;
}

.closed {
  height: 32px;
}

.closed .block-title input {
  margin-right: 8px;
}

.splitter {
  position: absolute;
  top: 264px;
  right: -9px;
  display: flex;
  align-items: center;
  justify-content: center;
  width: 9px;
  height: 39px;
  background-color: #f6f6f6;
  border: 1px solid #888;
  border-left: 0;
}

.cursor {
  position: absolute;
  top: 349px;
  left: 187px;
}

/* graphics area */

.viewport {
  position: relative;
  flex: 1;
  background-color: #fff;
}

.scene {
  position: absolute;
  top: 0;
  left: 0;
  width: 100%;
  height: 100%;
  font-size: 11px;
}

.view-head {
  position: relative;
  display: grid;
  grid-template-columns: 1fr auto 1fr;
  align-items: center;
  height: 30px;
}

.view-tools {
  grid-column: 2;
  display: flex;
  padding-right: 5px;
}

.view-tools button,
.pane-tools button {
  display: flex;
  align-items: center;
  justify-content: center;
  width: 26px;
  height: 20px;
}

.view-tools .caret {
  width: 14px;
}

.view-tools svg {
  width: 18px;
  height: 18px;
}

.pane-tools {
  display: flex;
  justify-content: flex-end;
  padding-right: 6px;
}

.pane-tools svg {
  width: 20px;
  height: 20px;
}

.tree-root {
  position: relative;
  display: flex;
  align-items: center;
  padding-left: 6px;
  height: 14px;
  color: #111;
}

.tree-root svg + svg {
  margin: 0 5px 0 12px;
}

.confirm button {
  position: absolute;
}

.confirm .accept {
  top: 35px;
  right: 73px;
}

.confirm .reject {
  top: 64px;
  right: 32px;
}

.task-pane {
  position: absolute;
  top: 50px;
  right: 0;
  width: 26px;
  border: 1px solid #888;
  border-right: 0;
}

.task-pane button {
  display: flex;
  align-items: center;
  justify-content: center;
  width: 100%;
  height: 24px;
  background-color: #d4d4d4;
  border-bottom: 1px solid #888;
}

.task-pane button:last-child {
  border-bottom: 0;
}

.task-pane .active {
  background-color: #fafafa;
}

.task-pane svg {
  width: 20px;
  height: 20px;
}

/* bottom bars */

.model-tabs {
  display: flex;
  height: 16px;
  padding-right: 1px;
  border-bottom: 1px solid #888;
}

.model-tabs > button {
  background-color: #d4d4d4;
  border: 1px solid #999;
  border-width: 1px 1px 0 0;
  font-family: "Open Sans", "Noto Sans", sans-serif;
  font-size: 12px;
  line-height: 12px;
}

.model-tabs .active {
  background-color: #f8f8f8;
  border-top-color: #f8f8f8;
  font-weight: bold;
}

.steps {
  display: flex;
  width: 65px;
  margin-left: 2px;
  background-color: #bbb;
  border-top: 1px solid #222;
}

.steps button {
  flex: 1;
  display: flex;
  align-items: center;
  justify-content: center;
  border: 1px solid #aaa;
}

.steps svg {
  width: 12px;
  height: 12px;
  fill: #999;
  stroke: #999;
}

.model {
  width: 57px;
}

.views {
  width: 68px;
}

.model-tabs .motion {
  width: 108px;
  padding-right: 8px;
}

.filler {
  flex: 1;
  border: 1px solid #888;
  border-width: 1px 1px 0 0;
}

.statusbar {
  display: flex;
  align-items: center;
  height: 18px;
}

.app-name {
  flex: 1;
  margin-right: 7px;
  padding: 2px 0 3px 1px;
  border-right: 1px solid #ccc;
}

.state {
  margin-right: 14px;
  padding: 2px 7px 3px 3px;
  border: 1px solid #ccc;
  border-width: 0 1px;
  color: #111;
}

.units {
  width: 88px;
  padding: 2px 0 3px 41px;
  border-left: 1px solid #ccc;
  color: #aaa;
}

.statusbar button {
  width: 18px;
  height: 18px;
  margin-right: 1px;
}
```
